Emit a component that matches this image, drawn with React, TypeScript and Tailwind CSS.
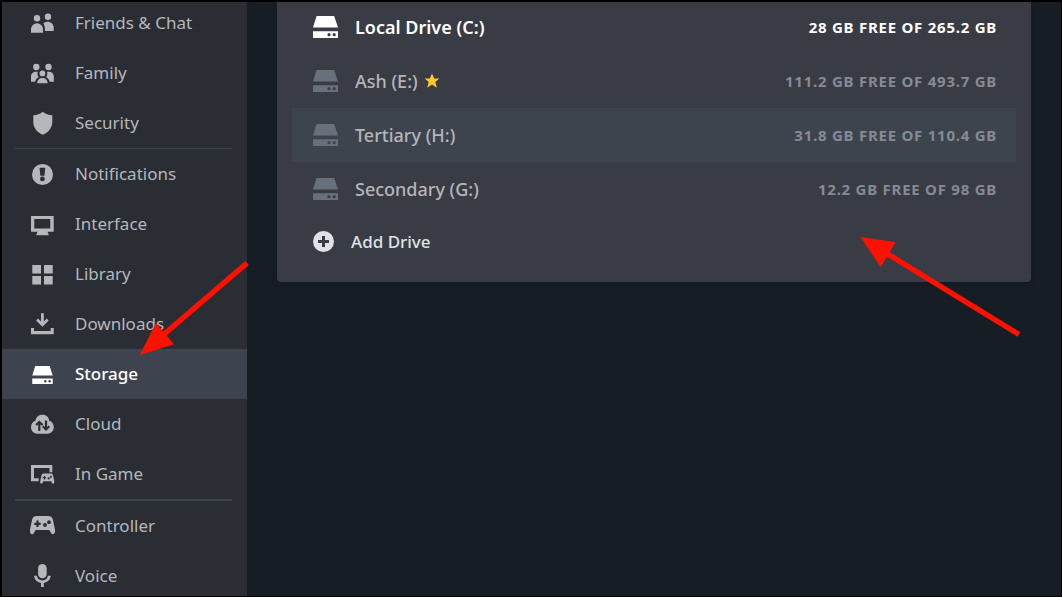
import { useState } from 'react';
import type { ReactNode } from 'react';
import clsx from 'clsx';

interface NavItem {
  label: string;
  icon: ReactNode;
}

interface Drive {
  name: string;
  space: string;
  favorite?: boolean;
}

const DriveIcon = ({ className }: { className: string }) => (
  <svg className={className} viewBox="0 0 25 22" fill="currentColor">
    <path d="M3.6 0h17.6L25 11.6H0z" />
    <path
      fillRule="evenodd"
      d="M0 15.3h25V22H0zM16 17.1a1.6 1.6 0 1 0 0 3.2 1.6 1.6 0 0 0 0-3.2zM21.2 17.1a1.6 1.6 0 1 0 0 3.2 1.6 1.6 0 0 0 0-3.2z"
    />
  </svg>
);

const NavIcon = ({ children }: { children: ReactNode }) => (
  <svg className="w-[26px] h-[26px]" viewBox="0 0 26 26" fill="currentColor">
    {children}
  </svg>
);

// pad body with the d-pad and two buttons punched out
const Gamepad = () => (
  <path
    fillRule="evenodd"
    d="M8 3h11c3 0 4.2 1.2 4.8 3.3l2.1 9.7c.5 2.5 0 5.3-2 5.3-.8 0-1.3-.4-1.8-1.2L20.3 17H6.7l-1.8 3.1c-.5.8-1 1.2-1.8 1.2-2 0-2.500-2.800-2-5.300l2.100-9.700C3.800 4.200 5 3 8 3zM7.400 7.600v2.100H5.300v2.200h2.100V14h2.200v-2.100h2.100V9.700H9.600V7.600zM16 10.100a1.900 1.900 0 1 0 0 3.800 1.900 1.900 0 0 0 0-3.800zM20 7.300a1.900 1.900 0 1 0 0 3.800 1.900 1.900 0 0 0 0-3.800z"
  />
);

const groups: NavItem[][] = [
  [
    {
      label: 'Friends & Chat',
      icon: (
        <NavIcon>
          <circle cx="8" cy="8.3" r="3.2" />
          <path d="M2 22.7v-3.600a6 5.800 0 0 1 12 0v3.600z" />
          <circle cx="19" cy="6.7" r="3.2" />
          <path d="M14.3 13.2c1.100-.9 2.600-1.500 4.200-1.500 3.600 0 6.200 2.600 6.200 5.900V21h-8.800v-2.200c0-2.100-.5-3.900-1.600-5.600z" />
        </NavIcon>
      ),
    },
    {
      label: 'Family',
      icon: (
        <NavIcon>
          <circle cx="7.3" cy="7" r="3.2" />
          <circle cx="19.5" cy="7" r="3.2" />
          <circle cx="13.4" cy="13.4" r="2.9" />
          <path d="M2 21.800v-5.300c0-2.900 2.200-4.700 5-4.700h1.700c-.5 2.300-.1 4.100 1 5.500-1.900.9-3.200 2.400-3.500 4.500z" />
          <path d="M24.800 21.800v-5.300c0-2.900-2.200-4.700-5-4.700h-1.700c.5 2.300.1 4.100-1 5.500 1.900.9 3.200 2.400 3.500 4.500z" />
          <path d="M8.200 23.300c0-3.300 2.200-5.300 5.200-5.300s5.200 2 5.200 5.300z" />
        </NavIcon>
      ),
    },
    {
      label: 'Security',
      icon: (
        <NavIcon>
          <path d="M13.800 1.700c2.600 2.200 5.800 3.300 9.500 3.600v6.500c0 6-3.600 10.600-9.500 12.900-5.900-2.300-9.500-6.900-9.500-12.900V5.300c3.700-.3 6.900-1.400 9.500-3.600z" />
        </NavIcon>
      ),
    },
  ],
  [
    {
      label: 'Notifications',
      icon: (
        <NavIcon>
          <path
            fillRule="evenodd"
            d="M13.500 3a10.500 10.500 0 1 0 0 21 10.500 10.500 0 0 0 0-21zM10.500 6.700h5.800l-.9 8h-4zM13.400 15.500a2.400 2.400 0 1 0 0 4.800 2.400 2.400 0 0 0 0-4.800z"
          />
        </NavIcon>
      ),
    },
    {
      label: 'Interface',
      icon: (
        <NavIcon>
          <path
            fillRule="evenodd"
            d="M2 5h22.700v15.700H18.500l1.400 3.600H7.100l1.400-3.600H2zM5.300 8v9.500h16V8z"
          />
        </NavIcon>
      ),
    },
    {
      label: 'Library',
      icon: (
        <NavIcon>
          <path d="M3.300 4H12v8.500H3.300zM15 4h8.700v8.500H15zM3.300 15H12v8.500H3.300zM15 15h8.700v8.500H15z" />
        </NavIcon>
      ),
    },
    {
      label: 'Downloads',
      icon: (
        <NavIcon>
          <path d="M2 17h3v3h16.700v-3h3v6.300H2z" />
          <path d="M12 2.300h2.800v8.300l3-3 1.900 2-6.300 6.200-6.300-6.200 1.900-2 3 3z" />
        </NavIcon>
      ),
    },
    {
      label: 'Storage',
      icon: (
        <span className="flex justify-center w-[26px] pt-0.5">
          <DriveIcon className="w-[21px] h-[18px]" />
        </span>
      ),
    },
    {
      label: 'Cloud',
      icon: (
        <NavIcon>
          <path d="M13.400 3.700c4 0 6.700 2.700 6.800 6 2.700.7 4.600 3.200 4.600 6.400 0 3.900-2.600 6.600-6.200 6.600H8.200c-3.600 0-6.200-2.700-6.200-6.600 0-3.200 1.900-5.700 4.600-6.400.1-3.300 2.800-6 6.800-6z" />
          <path
            className="text-[#2a2d34]"
            d="M9.200 20v-6.600l-1.500 1.400-1.400-1.500 4-3.900 4 3.900-1.400 1.500-1.500-1.400V20zM18.100 9.400V16l1.500-1.400 1.400 1.500-4 3.900-4-3.900 1.400-1.500 1.500 1.400V9.400z"
            fill="currentColor"
          />
        </NavIcon>
      ),
    },
    {
      label: 'In Game',
      icon: (
        <NavIcon>
          <path d="M2 4h21.300v7.300h-2.800V7H5v10.300h4.700v3H2z" />
          <g transform="translate(10.7 10.7) scale(.56)">
            <Gamepad />
          </g>
        </NavIcon>
      ),
    },
  ],
  [
    {
      label: 'Controller',
      icon: (
        <NavIcon>
          <Gamepad />
        </NavIcon>
      ),
    },
    {
      label: 'Voice',
      icon: (
        <NavIcon>
          <rect x="9.1" y="1" width="8.600" height="14.300" rx="4.300" />
          <path d="M5 12.700h2.900c.4 2.800 2.500 4.700 5.500 4.700s5.100-1.900 5.500-4.700h2.900c-.4 3.700-3 6.500-7 7.200V24H12v-4.100c-4-.7-6.600-3.500-7-7.200z" />
        </NavIcon>
      ),
    },
  ],
];

const drives: Drive[] = [
  { name: 'Local Drive (C:)', space: '28 GB free of 265.2 GB' },
  { name: 'Ash (E:)', space: '111.2 GB free of 493.7 GB', favorite: true },
  { name: 'Tertiary (H:)', space: '31.8 GB free of 110.4 GB' },
  { name: 'Secondary (G:)', space: '12.2 GB free of 98 GB' },
];

const Sidebar = () => {
  const [active, setActive] = useState('Storage');

  return (
    <nav className="shrink-0 w-[245px] bg-[#2a2d34]">
      <div className="-mt-1">
        {groups.map((group, i) => (
          <div key={i}>
            {i > 0 && (
              <hr
                className={clsx(
                  'ml-[13px] mr-[15px] border-[#3d4450]',
                  i === 2 ? 'border-t-2' : 'border-t'
                )}
              />
            )}
            {group.map((item) => (
              <a
                key={item.label}
                href="#"
                onClick={() => setActive(item.label)}
                className={clsx(
                  'flex items-center gap-5 h-[50px] pl-[27px] text-[17px] leading-6',
                  active === item.label
                    ? 'bg-[#3d4450] text-white font-medium'
                    : 'text-[#b4b8bb]'
                )}
              >
                {item.icon}
                {item.label}
              </a>
            ))}
          </div>
        ))}
      </div>
    </nav>
  );
};

const DriveList = () => {
  const [current, setCurrent] = useState('Local Drive (C:)');
  const [hovered, setHovered] = useState('Tertiary (H:)');

  return (
    <section className="mx-[30px] px-[15px] pb-[15px] rounded-b bg-[#393c44] shadow-md">
      <div className="-mt-0.5">
        {drives.map((drive) => {
          const selected = drive.name === current;
          return (
            <button
              key={drive.name}
              type="button"
              onClick={() => setCurrent(drive.name)}
              onMouseEnter={() => setHovered(drive.name)}
              className={clsx(
                'flex items-center w-full h-[54px] pl-[21px] pr-[19px]',
                drive.name === hovered && 'bg-[#3e444e]'
              )}
            >
              <DriveIcon
                className={clsx(
                  'w-[25px] h-[22px] mr-[17px]',
                  selected ? 'text-white' : 'text-[#67707b]'
                )}
              />
              <span
                className={clsx(
                  'text-lg',
                  selected
                    ? 'font-semibold text-white'
                    : 'font-medium text-[#b4b5b8]'
                )}
              >
                {drive.name}
              </span>
              {drive.favorite && (
                <svg
                  className="w-4 h-4 ml-1.5 text-[#ffc82c]"
                  viewBox="0 0 16 16"
                  fill="currentColor"
                >
                  <path d="M8 .6l2.200 5h5.200l-4.100 3.500 1.500 5.700L8 11.600l-4.800 3.200 1.500-5.700L.6 5.600h5.200z" />
                </svg>
              )}
              <span
                className={clsx(
                  'ml-auto text-[15px] leading-5 font-bold uppercase tracking-wider',
                  selected ? 'text-white' : 'text-[#858b94]'
                )}
              >
                {drive.space}
              </span>
            </button>
          );
        })}
        <button
          type="button"
          className="flex items-center h-[51px] pl-[21px] gap-[17px] text-[17px] leading-6 font-medium text-[#dfe3e6]"
        >
          <svg className="w-[21px] h-[21px]" viewBox="0 0 21 21">
            <circle cx="10.5" cy="10.5" r="10.5" fill="currentColor" />
            <path
              d="M10.500 5v11M5 10.500h11"
              stroke="#393c44"
              strokeWidth="3"
              fill="none"
            />
          </svg>
          Add Drive
        </button>
      </div>
    </section>
  );
};

const Arrows = () => (
  <svg
    className="absolute -top-0.5 -left-0.5 w-[1062px] h-[597px] pointer-events-none"
    viewBox="0 0 1062 597"
    fill="#ff1100"
    stroke="#ff1100"
    aria-hidden="true"
  >
    <path d="M247 263L162 336M1019 334.500L886 253" strokeWidth="5.5" />
    <path
      d="M139.700 355l34.300-10.700L156 323zM860.300 237l35.400 5-15 25z"
      stroke="none"
    />
  </svg>
);

const App = () => (
  <div className="relative flex h-screen overflow-hidden border-t-2 border-l-2 border-r border-b border-black bg-[#171d25] font-['Noto_Sans',sans-serif]">
    <Sidebar />
    <main className="flex-1">
      <DriveList />
    </main>
    <Arrows />
  </div>
);

export default App;
